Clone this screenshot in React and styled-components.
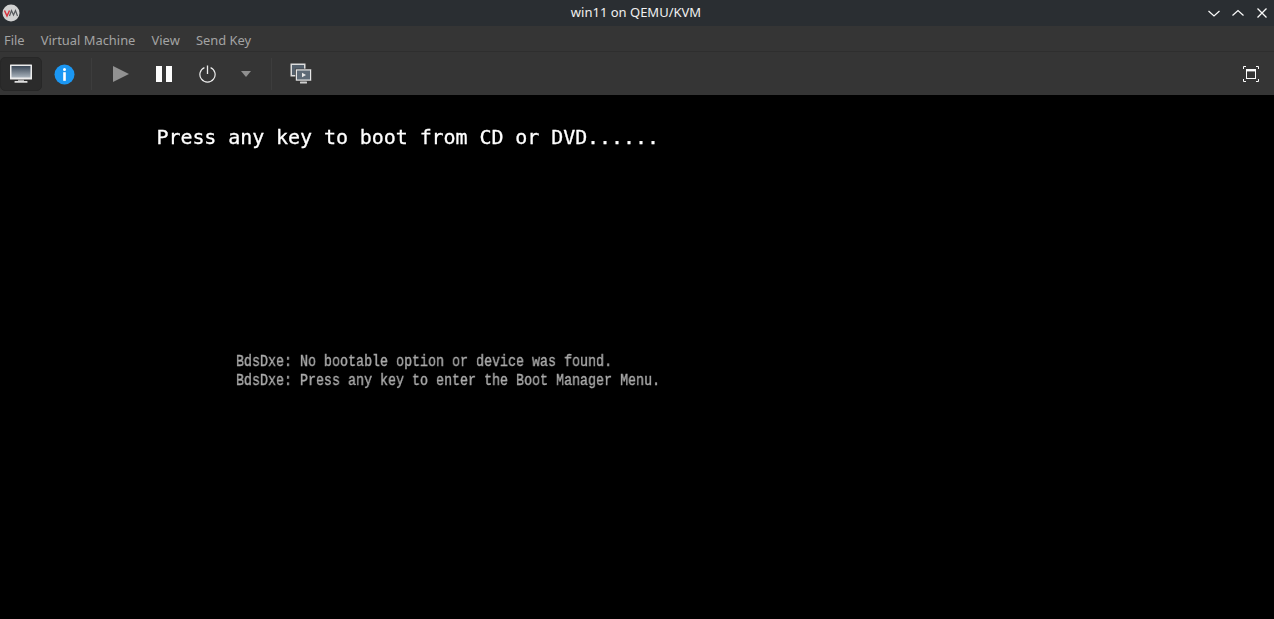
import React from 'react'
import styled, { createGlobalStyle } from 'styled-components'

const GlobalStyle = createGlobalStyle`
  html, body {
    margin: 0;
    padding: 0;
    background: #000;
    overflow: hidden;
  }
`

const Window = styled.div`
  width: 1274px;
  height: 619px;
  display: flex;
  flex-direction: column;
  font-family: "Noto Sans", sans-serif;
  font-size: 13px;
  color: #fcfcfc;
`

const TitleBar = styled.div`
  height: 26px;
  flex: none;
  display: grid;
  grid-template-columns: 1fr auto 1fr;
  align-items: center;
  background: #2a2e32;
`

const AppLogo = styled.svg`
  display: block;
  margin-left: 2px;
`

const Title = styled.div`
  font-size: 13px;
  line-height: 24px;
  padding: 0 2px 2px 0;
  color: #f0f0f0;
`

const WindowButtons = styled.div`
  display: flex;
  justify-content: flex-end;
  align-items: center;
  gap: 8px;
  padding-right: 4px;
`

const MenuBar = styled.div`
  height: 26px;
  flex: none;
  box-sizing: border-box;
  display: flex;
  align-items: center;
  gap: 16.2px;
  padding: 4px 0 0 4px;
  background: #353535;
  border-bottom: 1px solid #2e2e2e;
`

const MenuItem = styled.span`
  color: #a3a3a3;
  font-size: 12.9px;
  line-height: 21px;
`

const ToolBar = styled.div`
  height: 43px;
  flex: none;
  box-sizing: border-box;
  padding-top: 1px;
  display: flex;
  align-items: center;
  background: #353535;
`

const ToolButton = styled.div`
  width: ${p => p.$width || 42}px;
  height: 34px;
  margin-right: ${p => p.$gap || 0}px;
  flex: none;
  display: flex;
  align-items: center;
  justify-content: center;
  box-sizing: border-box;
  border-radius: 5px;
  ${p => p.$active && `
    background: #2b2b2b;
    border: 1px solid #272727;
  `}
`

const Divider = styled.div`
  width: 1px;
  height: 32px;
  flex: none;
  margin: 0 ${p => p.$right || 0}px 0 ${p => p.$left || 0}px;
  background: #3d3d3d;
`

const Spacer = styled.div`
  flex: 1;
`

const Screen = styled.div`
  flex: 1;
  background: #000;
  overflow: hidden;
`

const BootPrompt = styled.div`
  padding: 30px 0 0 156.5px;
  height: 25px;
  font-family: "DejaVu Sans Mono", monospace;
  font-size: 20px;
  line-height: 25px;
  letter-spacing: -0.08px;
  color: #fff;
  white-space: pre;
  -webkit-text-stroke: 0.3px #fff;
  will-change: transform;
`

const FirmwareLog = styled.div`
  margin: 203px 0 0 236px;
  font-family: "Liberation Mono", monospace;
  font-size: 16px;
  line-height: 19px;
  color: #aaa;
  white-space: pre;
  -webkit-text-stroke: 0.35px #aaa;
  transform: scaleX(0.8333);
  transform-origin: left top;
  will-change: transform;
`

const Chevron = ({ up }) => (
  <svg width="16" height="16" viewBox="0 0 16 16">
    <path
      d={up ? 'M2.5 10.5 L8 5.5 L13.5 10.5' : 'M2.5 6 L8 11 L13.5 6'}
      fill="none"
      stroke="#fcfcfc"
      strokeWidth="1.2"
    />
  </svg>
)

const CloseIcon = () => (
  <svg width="16" height="16" viewBox="0 0 16 16">
    <path d="M3.5 3.5 L12.5 12.5 M12.5 3.5 L3.5 12.5" fill="none" stroke="#fcfcfc" strokeWidth="1.3" />
  </svg>
)

const MonitorIcon = () => (
  <svg width="22" height="20" viewBox="0 0 22 20">
    <defs>
      <linearGradient id="monitorGlass" x1="0" y1="0" x2="0" y2="1">
        <stop offset="0" stopColor="#3a4756" />
        <stop offset="1" stopColor="#aab4bd" />
      </linearGradient>
    </defs>
    <rect x="0" y="0.5" width="22" height="15" rx="0.5" fill="#ececec" />
    <rect x="1.5" y="2" width="19" height="11.5" fill="url(#monitorGlass)" />
    <rect x="8" y="15.5" width="6" height="1.6" fill="#a9a9a9" />
    <rect x="4.5" y="17" width="13" height="1.8" rx="0.5" fill="#e0e0e0" />
  </svg>
)

const InfoIcon = () => (
  <svg width="21" height="21" viewBox="0 0 21 21">
    <circle cx="10.5" cy="10.5" r="10" fill="#1b97f3" />
    <circle cx="10.5" cy="5.4" r="1.5" fill="#fff" />
    <rect x="9.2" y="8.2" width="2.6" height="8.6" fill="#fff" />
  </svg>
)

const PlayIcon = () => (
  <svg width="16" height="16" viewBox="0 0 16 16">
    <path d="M0 0 L16 8 L0 16 Z" fill="#919191" />
  </svg>
)

const PauseIcon = () => (
  <svg width="16" height="16" viewBox="0 0 16 16">
    <rect x="0" y="0" width="6" height="16" fill="#fcfcfc" />
    <rect x="10" y="0" width="6" height="16" fill="#fcfcfc" />
  </svg>
)

const PowerIcon = () => (
  <svg width="17" height="18" viewBox="0 0 17 18">
    <path d="M5.4 2.6 A7.6 7.6 0 1 0 11.6 2.6" fill="none" stroke="#ececec" strokeWidth="1.2" />
    <path d="M8.5 0.5 V9" fill="none" stroke="#ececec" strokeWidth="1.3" />
  </svg>
)

const CaretIcon = () => (
  <svg width="10" height="6" viewBox="0 0 10 6">
    <path d="M0 0 H10 L5 6 Z" fill="#8f8f8f" />
  </svg>
)

const SnapshotIcon = () => (
  <svg width="22" height="22" viewBox="0 0 22 22">
    <rect x="0.5" y="0.5" width="15" height="13" fill="#dcdcdc" />
    <rect x="2" y="2" width="12" height="10" fill="#55616d" />
    <rect x="5.5" y="6" width="16" height="12" fill="#e6e6e6" stroke="#353535" strokeWidth="0.6" />
    <rect x="7" y="7.5" width="13" height="9" fill="#5d6a77" />
    <path d="M12 9.8 L16 12 L12 14.2 Z" fill="#e8e8e8" />
    <rect x="10" y="18.6" width="7" height="1.8" rx="0.5" fill="#cfcfcf" />
  </svg>
)

const FullscreenIcon = () => (
  <svg width="16" height="16" viewBox="0 0 16 16">
    <path
      d="M0.5 3 V0.5 H3 M13 0.5 H15.5 V3 M15.5 13 V15.5 H13 M3 15.5 H0.5 V13"
      fill="none"
      stroke="#fcfcfc"
      strokeWidth="1"
    />
    <rect x="3.5" y="3.5" width="9" height="9" fill="none" stroke="#fcfcfc" strokeWidth="1" />
    <rect x="3" y="3" width="10" height="2.4" fill="#fcfcfc" />
  </svg>
)

const menus = ['File', 'Virtual Machine', 'View', 'Send Key']

const App = () => (
  <Window>
    <GlobalStyle />
    <TitleBar>
      <AppLogo width="18" height="18" viewBox="0 0 18 18">
        <circle cx="9" cy="9" r="8.5" fill="#d2d2d2" />
        <path d="M2.5 6.5 L5 12 L7.5 6.5" fill="none" stroke="#d8343f" strokeWidth="1.5" />
        <path d="M7.5 12 L9.5 6.5 L11.5 11 L13.5 6.5 L15.5 12" fill="none" stroke="#55585c" strokeWidth="1.2" />
      </AppLogo>
      <Title>win11 on QEMU/KVM</Title>
      <WindowButtons>
        <Chevron />
        <Chevron up />
        <CloseIcon />
      </WindowButtons>
    </TitleBar>
    <MenuBar>
      {menus.map(m => <MenuItem key={m}>{m}</MenuItem>)}
    </MenuBar>
    <ToolBar>
      <ToolButton $active $gap={1}><MonitorIcon /></ToolButton>
      <ToolButton><InfoIcon /></ToolButton>
      <Divider $left={6} />
      <ToolButton $width={58}><PlayIcon /></ToolButton>
      <ToolButton $width={28}><PauseIcon /></ToolButton>
      <ToolButton $width={58}><PowerIcon /></ToolButton>
      <ToolButton $width={20}><CaretIcon /></ToolButton>
      <Divider $left={15} />
      <ToolButton $width={57}><SnapshotIcon /></ToolButton>
      <Spacer />
      <ToolButton $width={16} $gap={15}><FullscreenIcon /></ToolButton>
    </ToolBar>
    <Screen>
      <BootPrompt>Press any key to boot from CD or DVD......</BootPrompt>
      <FirmwareLog>
        BdsDxe: No bootable option or device was found.{'\n'}
        BdsDxe: Press any key to enter the Boot Manager Menu.
      </FirmwareLog>
    </Screen>
  </Window>
)

export default App
